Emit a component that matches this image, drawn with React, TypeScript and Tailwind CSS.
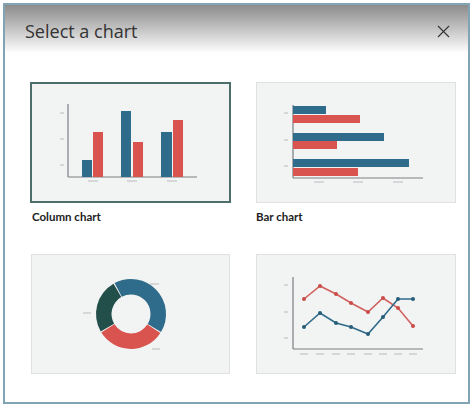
import { X } from 'lucide-react';

const BLUE = '#2f6b8a';
const RED = '#d9534f';
const TEAL = '#234f4a';
const AXIS = '#7a7f82';
const TICK = '#b8bcbf';

const Axes = ({ x = 36, top = 22, bottom = 95, right = 166 }: { x?: number; top?: number; bottom?: number; right?: number }) => (
  <>
    <line x1={x} y1={top} x2={x} y2={bottom} stroke={AXIS} strokeWidth={1.2} />
    <line x1={x} y1={bottom} x2={right} y2={bottom} stroke={AXIS} strokeWidth={1.2} />
  </>
);

const ColumnChart = () => (
  <svg width="197" height="117" viewBox="0 0 197 117">
    <Axes x={36} top={20} bottom={93} right={165} />
    {[29, 55, 81].map((y) => (
      <line key={y} x1={28} y1={y} x2={32} y2={y} stroke={TICK} strokeWidth={1} />
    ))}
    <rect x={50} y={76} width={10} height={17} fill={BLUE} />
    <rect x={61} y={48} width={10} height={45} fill={RED} />
    <rect x={89} y={27} width={10} height={66} fill={BLUE} />
    <rect x={101} y={58} width={10} height={35} fill={RED} />
    <rect x={129} y={48} width={11} height={45} fill={BLUE} />
    <rect x={141} y={36} width={10} height={57} fill={RED} />
    {[61, 100, 140].map((x) => (
      <line key={x} x1={x - 5} y1={97} x2={x + 5} y2={97} stroke={TICK} strokeWidth={1} />
    ))}
  </svg>
);

const BarChart = () => (
  <svg width="199" height="120" viewBox="0 0 199 120">
    <Axes x={36} top={22} bottom={95} right={166} />
    {[30, 57, 83].map((y) => (
      <line key={y} x1={27} y1={y} x2={31} y2={y} stroke={TICK} strokeWidth={1} />
    ))}
    <rect x={36} y={23} width={33} height={8} fill={BLUE} />
    <rect x={36} y={32} width={67} height={8} fill={RED} />
    <rect x={36} y={50} width={91} height={8} fill={BLUE} />
    <rect x={36} y={58} width={44} height={8} fill={RED} />
    <rect x={36} y={76} width={116} height={8} fill={BLUE} />
    <rect x={36} y={85} width={65} height={8} fill={RED} />
    {[62, 101, 141].map((x) => (
      <line key={x} x1={x - 5} y1={99} x2={x + 5} y2={99} stroke={TICK} strokeWidth={1} />
    ))}
  </svg>
);

// ring segment between two angles (degrees, 0 = 12 o'clock, clockwise)
const arc = (cx: number, cy: number, R: number, r: number, a0: number, a1: number) => {
  const p = (rad: number, a: number) => {
    const t = ((a - 90) * Math.PI) / 180;
    return `${(cx + rad * Math.cos(t)).toFixed(2)} ${(cy + rad * Math.sin(t)).toFixed(2)}`;
  };
  const large = a1 - a0 > 180 ? 1 : 0;
  return `M ${p(R, a0)} A ${R} ${R} 0 ${large} 1 ${p(R, a1)} L ${p(r, a1)} A ${r} ${r} 0 ${large} 0 ${p(r, a0)} Z`;
};

const DonutChart = () => (
  <svg width="197" height="118" viewBox="0 0 197 118">
    <path d={arc(99, 59, 35, 19.5, -28, 121)} fill={BLUE} />
    <path d={arc(99, 59, 35, 19.5, 123, 238)} fill={RED} />
    <path d={arc(99, 59, 35, 19.5, 240, 330)} fill={TEAL} />
    <line x1={118} y1={29} x2={127} y2={29} stroke={TICK} strokeWidth={1} />
    <line x1={51} y1={58} x2={59} y2={58} stroke={TICK} strokeWidth={1} />
    <line x1={120} y1={94} x2={128} y2={94} stroke={TICK} strokeWidth={1} />
  </svg>
);

const red = [
  [47, 44], [63, 31], [79, 39], [94, 48], [111, 57], [126, 43], [141, 53], [156, 71],
];
const blue = [
  [47, 72], [63, 58], [79, 68], [94, 72], [111, 79], [126, 62], [141, 44], [156, 44],
];

const LineChart = () => (
  <svg width="197" height="119" viewBox="0 0 197 119">
    <Axes x={36} top={22} bottom={94} right={166} />
    {[30, 57, 83].map((y) => (
      <line key={y} x1={27} y1={y} x2={31} y2={y} stroke={TICK} strokeWidth={1} />
    ))}
    <polyline points={red.map((p) => p.join(',')).join(' ')} fill="none" stroke="#d0615c" strokeWidth={1.6} />
    <polyline points={blue.map((p) => p.join(',')).join(' ')} fill="none" stroke={BLUE} strokeWidth={1.6} />
    {red.map(([x, y]) => (
      <circle key={`r${x}`} cx={x} cy={y} r={2} fill="#c94c47" />
    ))}
    {blue.map(([x, y]) => (
      <circle key={`b${x}`} cx={x} cy={y} r={2} fill="#275d78" />
    ))}
    {red.map(([x]) => (
      <line key={`t${x}`} x1={x - 4} y1={99} x2={x + 4} y2={99} stroke={TICK} strokeWidth={1} />
    ))}
  </svg>
);

const App = () => {
  return (
    <div className="w-[474px] h-[410px] bg-white pt-[3px] pl-[3px]">
      <div className="w-[467px] h-[401px] border-2 border-[#80a4b4] bg-white">
        <div className="h-[48px] bg-linear-to-b from-[#8c8c8c] to-white flex items-center justify-between pl-[20px] pr-[14px]">
          <span className="text-[18px] text-[#333] pt-[4px]" style={{ fontFamily: '"Open Sans", sans-serif' }}>
            Select a chart
          </span>
          <X size={21} strokeWidth={1.3} className="text-[#333] mt-[5px]" />
        </div>
        <div className="grid grid-cols-[201px_200px] gap-x-[25px] gap-y-[29px] pl-[25px] pt-[29px]">
          <div>
            <div className="h-[121px] border-2 border-[#4e6e6c] bg-[#f2f3f3]">
              <ColumnChart />
            </div>
            <div className="mt-[5px] pl-[2px] text-[11.5px] font-bold text-[#222]" style={{ fontFamily: 'Lato, sans-serif' }}>
              Column chart
            </div>
          </div>
          <div>
            <div className="h-[121px] border border-[#e0e0e0] bg-[#f2f3f3]">
              <BarChart />
            </div>
            <div className="mt-[5px] text-[11.5px] font-bold text-[#222]" style={{ fontFamily: 'Lato, sans-serif' }}>
              Bar chart
            </div>
          </div>
          <div className="pl-[1px]">
            <div className="h-[120px] w-[199px] border border-[#e0e0e0] bg-[#f2f3f3]">
              <DonutChart />
            </div>
          </div>
          <div>
            <div className="h-[120px] border border-[#e0e0e0] bg-[#f2f3f3]">
              <LineChart />
            </div>
          </div>
        </div>
      </div>
    </div>
  );
};

export default App;
